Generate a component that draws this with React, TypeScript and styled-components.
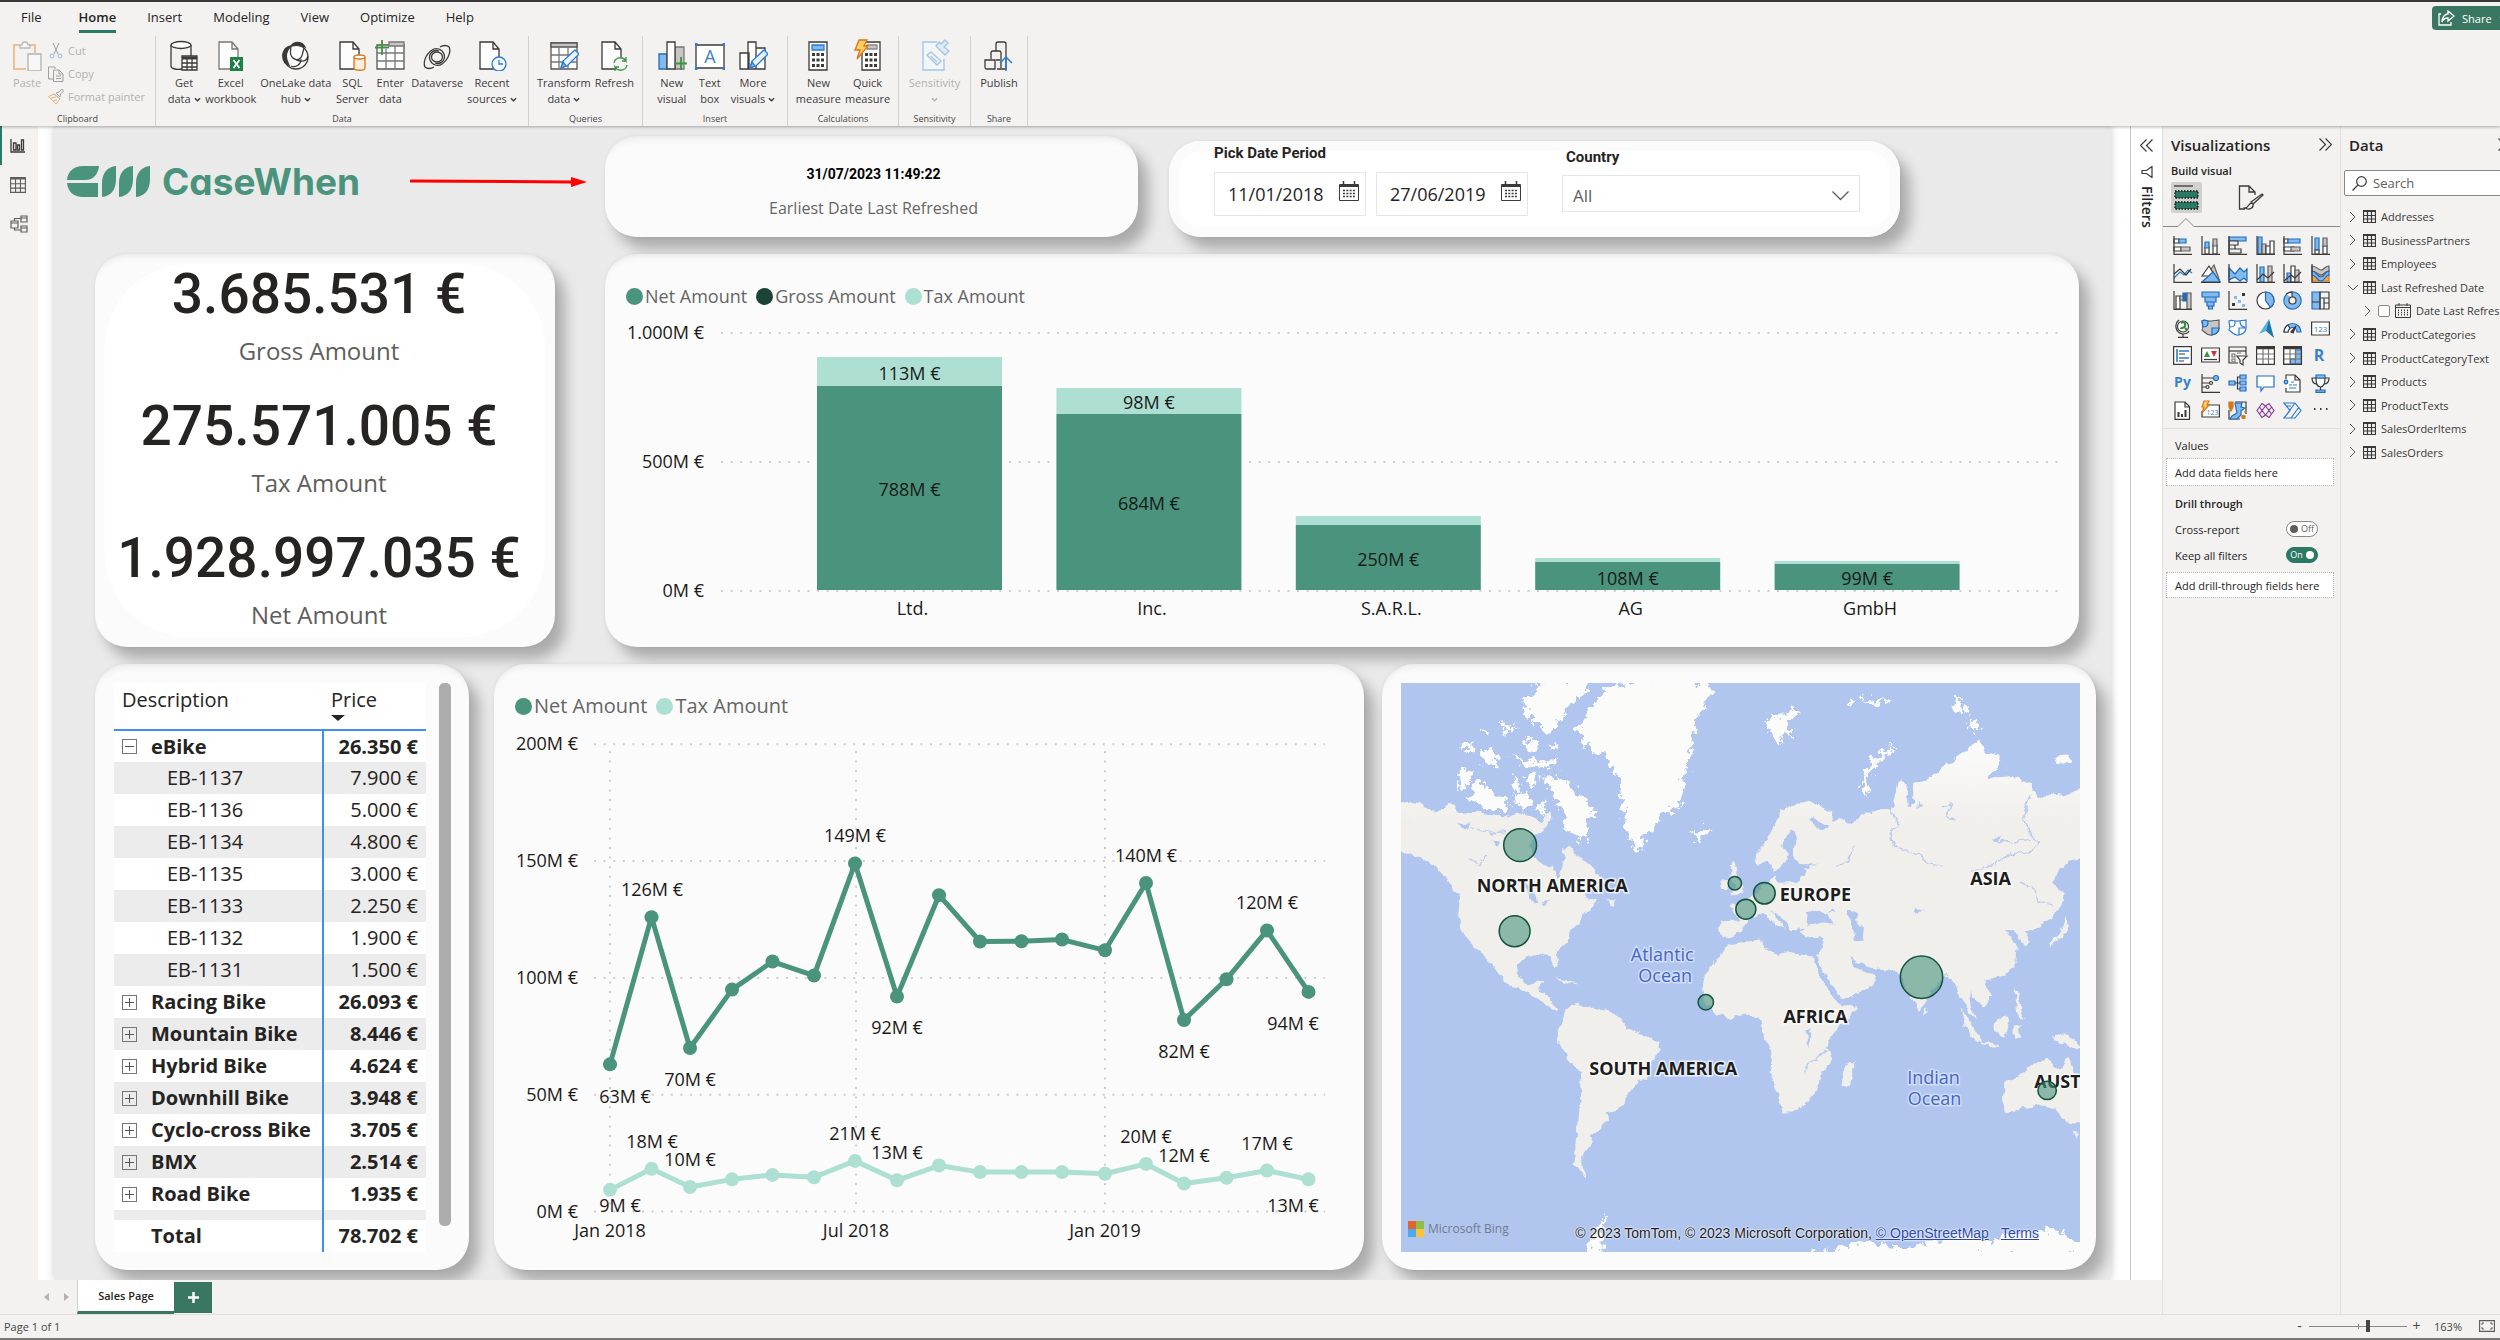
import React from "react";
import styled, { createGlobalStyle, css } from "styled-components";

const UI = `"Segoe UI", "Open Sans", "Noto Sans", sans-serif`;
const DIN = `"DIN", Roboto, "Noto Sans", sans-serif`;
const GREEN = "#4a937d";
const MINT = "#addfd3";
const DARK = "#3b3a39";
const BLUE = "#2b7cd3";
const SKY = "#83b9eb";
const GREY = "#c8c6c4";

const GlobalStyle = createGlobalStyle`
  * { box-sizing: border-box; }
  body { margin: 0; font-family: ${UI}; font-size: 11px; color: #252423; background: #f3f2f1; overflow: hidden; }
  button, input, select { font: inherit; color: inherit; border: 0; background: none; padding: 0; margin: 0; }
  svg { display: block; flex: none; }
`;

const Shell = styled.div`
  display: flex;
  flex-direction: column;
  height: 100vh;
  min-height: 900px;
  border-top: 2px solid ${DARK};
`;

/* ---------- Ribbon ---------- */

const Ribbon = styled.header`
  position: relative;
  z-index: 2;
  flex: none;
  background: #f3f2f1;
  box-shadow: 0 1px 3px rgba(0, 0, 0, 0.3);
`;
const TabBar = styled.nav`
  display: flex;
  align-items: flex-start;
  height: 34px;
  padding-left: 21px;
  overflow: hidden;
  gap: 31px;
`;
const RibbonTab = styled.button<{ $active?: boolean; $first?: boolean }>`
  height: 31px;
  line-height: 24px;
  padding: 3px 0 1px;
  font-size: 13px;
  border-bottom: 3px solid ${(p) => (p.$active ? "#2b7865" : "transparent")};
  font-weight: ${(p) => (p.$active ? 600 : 400)};
  margin-right: ${(p) => (p.$first ? "6px" : "0")};
`;
const ShareButton = styled.button`
  display: flex;
  align-items: center;
  gap: 7px;
  flex: none;
  height: 24px;
  width: 88px;
  margin: 4px -20px 0 auto;
  padding-left: 6px;
  border-radius: 4px;
  background: #3a7763;
  color: #fff;
  font-size: 11px;
  white-space: nowrap;
`;
const Groups = styled.div`
  display: flex;
  height: 90px;
`;
const Group = styled.section<{ $w: number }>`
  display: flex;
  flex-direction: column;
  justify-content: space-between;
  width: ${(p) => p.$w}px;
  border-right: 1px solid #d2d0ce;
`;
const GroupRow = styled.div`
  display: flex;
  justify-content: center;
  gap: 4px;
  padding-top: 3px;
`;
const GroupName = styled.div`
  text-align: center;
  font-size: 9px;
  line-height: 14px;
  color: #484644;
`;
const Tool = styled.button<{ $dim?: boolean }>`
  display: flex;
  flex-direction: column;
  align-items: center;
  gap: 4px;
  min-width: 34px;
  font-size: 11px;
  line-height: 16px;
  white-space: nowrap;
  color: ${(p) => (p.$dim ? "#b3b0ad" : "#3b3a39")};
`;
const ToolText = styled.span`
  display: flex;
  align-items: center;
  justify-content: center;
  min-height: 16px;
  gap: 3px;
`;
const SmallTools = styled.div`
  display: flex;
  flex-direction: column;
`;
const SmallTool = styled.button`
  display: flex;
  align-items: center;
  gap: 4px;
  height: 23px;
  color: #b3b0ad;
`;

const Chevron = ({ size = 7, color = DARK, w = 1.5 }: { size?: number; color?: string; w?: number }) => (
  <svg width={size} height={size} viewBox="0 0 8 8" fill="none" stroke={color} strokeWidth={w} aria-hidden="true">
    <path d="M1 2.5 4 5.5 7 2.5" />
  </svg>
);

const Big = ({ children, dim }: { children: React.ReactNode; dim?: boolean }) => (
  <svg width="30" height="32" viewBox="0 0 30 32" fill="none" stroke={DARK} strokeWidth="1.3" opacity={dim ? 0.45 : 1} aria-hidden="true">
    {children}
  </svg>
);
const Doc = () => <path d="M3 3h13l6 7v20H3zM16 3v7h6" fill="#fdfdfd" />;
const Pencil = () => (
  <g stroke={BLUE}>
    <path d="m12 29 2-7 12-11 4 4-12 12z" fill="#eaf4fd" />
    <path d="m12 29 2-6 3 4z" fill={SKY} />
  </g>
);
const Glyph = styled.text<{ $size: number; $bold?: boolean }>`
  font-size: ${(p) => p.$size}px;
  font-weight: ${(p) => (p.$bold ? 700 : 400)};
  text-anchor: middle;
  fill: #3b82c4;
  stroke: none;
`;

const ribbonIcons: Record<string, React.ReactNode> = {
  paste: (
    <Big dim>
      <path d="M8 6H2v24h12" stroke="#e08a2c" strokeWidth="2" />
      <path d="M17 6h6v8" stroke="#e08a2c" strokeWidth="2" />
      <path d="M8 9V6h2c0-4 6-4 6 0h2v3z" fill="#fff" stroke="#777" />
      <path d="M16 15h13v17H16z" fill="#fff" stroke="#666" />
    </Big>
  ),
  getData: (
    <Big>
      <path d="M2 6v21c0 3 6 4 11 3M22 6v11" />
      <ellipse cx="12" cy="6" rx="10" ry="3.5" fill="#fdfdfd" />
      <path d="M13 17h15v14H13z" fill="#fff" />
      <path d="M13 19h15" strokeWidth="3" />
      <path d="M13 24h15M13 28h15M18 18v13M23 18v13" />
    </Big>
  ),
  excel: (
    <Big>
      <g stroke="#777"><Doc /></g>
      <path d="M14 18h13v14H14z" fill="#1f8043" stroke="none" />
      <path d="m17.5 21 6 8m0-8-6 8" stroke="#fff" strokeWidth="1.8" />
    </Big>
  ),
  oneLake: (
    <Big>
      <circle cx="15" cy="18" r="12" fill="#fdfdfd" />
      <path d="M4 24C-1 16 3 8 10 7 4 13 4 19 8 26zM10 7c3-5 11-5 14 1-5-2-9-2-14-1z" fill={DARK} />
      <path d="M10 8c-2 9 1 12 9 14M15 21c7-1 6-6 8-12M10 27c4 2 10-1 10-7M20 22c4 1 6-2 7-5" />
    </Big>
  ),
  sql: (
    <Big>
      <Doc />
      <path d="M17 18v11c0 3 11 3 11 0V18" fill="#fdeedd" stroke="#d8761c" />
      <ellipse cx="22.5" cy="18" rx="5.5" ry="2" fill="#fff" stroke="#d8761c" />
    </Big>
  ),
  enter: (
    <Big>
      <path d="M2 6h27v24H2z" fill="#fff" stroke="#555" />
      <path d="M14 3h15v4H14z" fill={GREY} stroke="#777" />
      <path d="M2 14h27M2 22h27M11 10v20M20 7v23" stroke="#777" />
      <path d="M7 1v15M0 8.5h14" stroke="#3a9440" strokeWidth="1.8" />
    </Big>
  ),
  dataverse: (
    <Big>
      <ellipse cx="15" cy="18" rx="5.5" ry="5" />
      <path d="M17 12c-6-2-11 3-9 9 2 5 8 7 12 4 7-5 9-13 7-17-2-2-6-2-9 0" />
      <path d="M13 24c6 2 11-3 9-9-2-5-8-7-12-4-7 5-9 13-7 17 2 2 6 2 9 0" />
    </Big>
  ),
  recent: (
    <Big>
      <Doc />
      <circle cx="22" cy="25" r="7" fill="#f4faff" stroke={BLUE} />
      <path d="M22 21v4h4" stroke={BLUE} />
    </Big>
  ),
  transform: (
    <Big>
      <path d="M2 4h26v26H2z" fill="#fff" stroke="#555" />
      <path d="M2 4h26v4H2z" fill={GREY} stroke="#555" />
      <path d="M2 16h26M2 23h26M10 8v22M19 8v22" stroke="#777" />
      <Pencil />
    </Big>
  ),
  refresh: (
    <Big>
      <Doc />
      <circle cx="21" cy="25" r="7" fill="#f3f2f1" stroke="none" />
      <path d="M15 24c1-6 9-7 12-2v-4m0 4h-4M28 26c-1 6-9 7-12 2v4m0-4h4" stroke="#3a9440" />
    </Big>
  ),
  newVisual: (
    <Big>
      <path d="M18 8h9v22h-9z" fill={GREY} stroke="#777" />
      <path d="M2 15h8v15H2z" fill={SKY} stroke="#1f6dbd" />
      <path d="M10 3h8v27h-8z" fill="#fff" />
      <path d="M24 18v13M17 24.5h14" stroke="#3a9440" strokeWidth="1.8" />
    </Big>
  ),
  textBox: (
    <Big>
      <path d="M1 6h28v23H1z" fill="#fff" />
      <Glyph x="15" y="24" $size={18}>A</Glyph>
      <path d="M0 5.5h2.5M27.5 5.5H30M0 29.5h2.5M27.5 29.5H30" stroke={BLUE} strokeWidth="3" />
    </Big>
  ),
  more: (
    <Big>
      <path d="M2 14h9v16H2zM18 9h9v21h-9zM10 3h8v27h-8z" fill="#fff" />
      <Pencil />
    </Big>
  ),
  newMeasure: (
    <Big>
      <path d="M6 3h18v28H6z" fill="#fff" />
      <path d="M9 6h12v5H9z" fill={SKY} stroke={BLUE} />
      <path d="M9 15.5h12M9 21h12M9 26.5h12" strokeDasharray="3 1.5" strokeWidth="3" />
    </Big>
  ),
  quick: (
    <Big>
      <path d="M9 3h18v28H9z" fill="#fff" />
      <path d="M14 6h10v4H14z" fill={GREY} stroke="#888" />
      <path d="M12 15.5h12M12 21h12M12 26.5h12" strokeDasharray="3 1.5" strokeWidth="3" />
      <path d="M6 1h8l-3 6h4L4 20l3-9H2z" fill="#fbcf62" stroke="#d8761c" />
    </Big>
  ),
  sensitivity: (
    <Big dim>
      <g stroke="#3f8fd6">
        <path d="M17 3H3v28h21V20" fill="#f4faff" />
        <path d="m7 16 4-3 10 9-4 4zM11 17l6 6" />
        <path d="m16 7 9 9 4-4-5-4 4-4-3-3-4 4-2-2z" fill="#cfe4f7" />
      </g>
    </Big>
  ),
  publish: (
    <Big>
      <path d="M12 12V5q0-2 2-2h6q2 0 2 2v25h-9M7 20v-6q0-2 2-2h6q2 0 2 2v15M1 21h10v9H3q-2 0-2-2zM12 21h4" />
      <path d="M22 32V18m-6 6 6-6 6 6" stroke={BLUE} strokeWidth="1.5" />
    </Big>
  ),
};

type ToolDef = { icon: string; lines: string[]; menu?: boolean; dim?: boolean };
const ribbonGroups: { name: string; w: number; tools: ToolDef[] }[] = [
  {
    name: "Data",
    w: 373,
    tools: [
      { icon: "getData", lines: ["Get", "data"], menu: true },
      { icon: "excel", lines: ["Excel", "workbook"] },
      { icon: "oneLake", lines: ["OneLake data", "hub"], menu: true },
      { icon: "sql", lines: ["SQL", "Server"] },
      { icon: "enter", lines: ["Enter", "data"] },
      { icon: "dataverse", lines: ["Dataverse"] },
      { icon: "recent", lines: ["Recent", "sources"], menu: true },
    ],
  },
  {
    name: "Queries",
    w: 114,
    tools: [
      { icon: "transform", lines: ["Transform", "data"], menu: true },
      { icon: "refresh", lines: ["Refresh"] },
    ],
  },
  {
    name: "Insert",
    w: 145,
    tools: [
      { icon: "newVisual", lines: ["New", "visual"] },
      { icon: "textBox", lines: ["Text", "box"] },
      { icon: "more", lines: ["More", "visuals"], menu: true },
    ],
  },
  {
    name: "Calculations",
    w: 111,
    tools: [
      { icon: "newMeasure", lines: ["New", "measure"] },
      { icon: "quick", lines: ["Quick", "measure"] },
    ],
  },
  { name: "Sensitivity", w: 72, tools: [{ icon: "sensitivity", lines: ["Sensitivity", ""], menu: true, dim: true }] },
  { name: "Share", w: 57, tools: [{ icon: "publish", lines: ["Publish"] }] },
];

function RibbonBar() {
  return (
    <Ribbon>
      <TabBar>
        {["File", "Home", "Insert", "Modeling", "View", "Optimize", "Help"].map((t) => (
          <RibbonTab key={t} $active={t === "Home"} $first={t === "File"}>{t}</RibbonTab>
        ))}
        <ShareButton>
          <svg width="17" height="16" viewBox="0 0 17 16" fill="none" stroke="#fff" strokeWidth="1.3" aria-hidden="true">
            <path d="M3 4H1v11h12v-3M10 1l6 5-6 5V8C7 8 5 9 4 12c0-5 3-8 6-8z" />
          </svg>
          Share
          <Chevron color="#fff" size={9} />
        </ShareButton>
      </TabBar>
      <Groups>
        <Group $w={156}>
          <GroupRow>
            <Tool $dim>
              {ribbonIcons.paste}
              <span>Paste</span>
            </Tool>
            <SmallTools>
              <SmallTool>
                <svg width="16" height="16" viewBox="0 0 16 16" fill="none" stroke="#a3a09d" aria-hidden="true">
                  <path d="m5 0 5 11M11 0 6 11" />
                  <circle cx="4" cy="13" r="2" stroke="#93bfe8" />
                  <circle cx="12" cy="13" r="2" stroke="#93bfe8" />
                </svg>
                Cut
              </SmallTool>
              <SmallTool>
                <svg width="16" height="16" viewBox="0 0 16 16" fill="none" stroke="#a3a09d" aria-hidden="true">
                  <path d="M5 13H.5V1H7v2M5.5 4H11l4 4v7.5H5.5zM11 4v4h4M8 10h5M8 12.5h5" />
                </svg>
                Copy
              </SmallTool>
              <SmallTool>
                <svg width="16" height="16" viewBox="0 0 16 16" fill="none" stroke="#a3a09d" aria-hidden="true">
                  <path d="m6 5 6 5M8 4l3-1 3-3 1.5 2-3 3-.5 3z" />
                  <path d="M6 5 .5 7.5 8 15l4-5M3 9l5-1M5 12l4-1" stroke="#eab27a" />
                </svg>
                Format painter
              </SmallTool>
            </SmallTools>
          </GroupRow>
          <GroupName>Clipboard</GroupName>
        </Group>
        {ribbonGroups.map((g) => (
          <Group key={g.name} $w={g.w}>
            <GroupRow>
              {g.tools.map((t) => (
                <Tool key={t.icon} $dim={t.dim}>
                  {ribbonIcons[t.icon]}
                  <span>
                    {t.lines.map((l, i) => (
                      <ToolText key={i}>
                        {l}
                        {t.menu && i === t.lines.length - 1 && <Chevron color={t.dim ? "#b3b0ad" : DARK} />}
                      </ToolText>
                    ))}
                  </span>
                </Tool>
              ))}
            </GroupRow>
            <GroupName>{g.name}</GroupName>
          </Group>
        ))}
      </Groups>
    </Ribbon>
  );
}

/* ---------- Workspace ---------- */

const Workspace = styled.div`
  display: flex;
  flex: 1;
  min-height: 0;
`;
const CenterColumn = styled.div`
  display: flex;
  flex-direction: column;
  flex: 1;
  min-width: 0;
`;
const CanvasRow = styled.div`
  display: flex;
  flex: 1;
  min-height: 0;
`;
const Rail = styled.nav`
  width: 38px;
  flex: none;
  display: flex;
  flex-direction: column;
`;
const RailButton = styled.button<{ $active?: boolean }>`
  display: flex;
  align-items: center;
  height: 39px;
  padding-left: 8px;
  border-left: 2px solid ${(p) => (p.$active ? "#2b7865" : "transparent")};
`;
const Canvas = styled.main`
  flex: 1;
  min-width: 0;
  display: flex;
  background: #fff;
  overflow: hidden;
  padding: 0 19px 0 16px;
`;
const Report = styled.div`
  flex: 1;
  min-width: 0;
  display: grid;
  grid-template-rows: 101fr 393fr 605fr;
  gap: 17px;
  padding: 10px 0;
  background: #eaeaea;
  box-shadow: 0 0 8px rgba(0, 0, 0, 0.2);
`;
const TopRow = styled.div`
  display: grid;
  grid-template-columns: 343fr 195fr 533fr 762fr;
  padding: 0 211px 0 13px;
  align-items: end;
  min-height: 0;
  & > :last-child { margin-left: 31px; }
`;
const MiddleRow = styled.div`
  display: grid;
  grid-template-columns: 460fr 1474fr;
  gap: 50px;
  padding: 0 32px 0 41px;
  min-height: 0;
`;
const BottomRow = styled.div`
  display: grid;
  grid-template-columns: 381fr 870fr 714fr;
  column-gap: 18px;
  padding: 0 15px 0 41px;
  min-height: 0;
  & > :first-child { margin-right: 7px; }
`;
const cardBase = css`
  background: #fbfbfb;
  border-radius: 32px;
  box-shadow: 10px 12px 14px rgba(0, 0, 0, 0.27), 0 0 4px rgba(0, 0, 0, 0.06), inset 0 9px 9px -8px rgba(0, 0, 0, 0.1);
`;
const Card = styled.section`
  ${cardBase}
  display: flex;
  flex-direction: column;
  min-width: 0;
  min-height: 0;
`;

/* logo and arrow */
const Logo = styled.div`
  display: flex;
  align-items: center;
  align-self: center;
  gap: 12px;
  height: 34px;
  margin-bottom: 10px;
  color: ${GREEN};
  font-family: Inter, "Open Sans", sans-serif;
  font-feature-settings: "cv11";
  font-size: 37px;
  line-height: 34px;
  font-weight: 700;
`;
const ArrowBox = styled.div`
  align-self: center;
  margin-bottom: 10px;
`;

/* refreshed card */
const RefreshCard = styled(Card)`
  align-self: stretch;
  align-items: center;
  justify-content: center;
  gap: 10px;
  padding: 8px 0 0 4px;
`;
const RefreshValue = styled.strong`
  font: 700 14px/24px ${DIN};
  color: #000;
`;
const RefreshLabel = styled.span`
  font-size: 16px;
  line-height: 24px;
  color: #666;
`;

/* slicers */
const SlicerCard = styled.section`
  ${cardBase}
  display: flex;
  align-items: flex-start;
  gap: 34px;
  height: 96px;
  padding: 0 40px 0 45px;
  background: #fff;
  box-shadow: 10px 12px 14px rgba(0, 0, 0, 0.27), 0 0 4px rgba(0, 0, 0, 0.06), inset 0 0 0 10px #fbfbfb;
`;
const Field = styled.div<{ $grow: number; $gap: number; $top?: number }>`
  flex: ${(p) => p.$grow} 1 0;
  display: flex;
  flex-direction: column;
  gap: ${(p) => p.$gap}px;
  padding-top: ${(p) => p.$top || 0}px;
  min-width: 0;
`;
const FieldLabel = styled.label<{ $inset?: boolean }>`
  font: 700 15px/24px ${DIN};
  padding-left: ${(p) => (p.$inset ? 4 : 0)}px;
  color: #252423;
`;
const DateRow = styled.div`
  display: flex;
  gap: 10px;
`;
const DateBox = styled.div`
  flex: 1;
  display: flex;
  align-items: center;
  justify-content: space-between;
  height: 44px;
  padding: 0 6px 0 13px;
  border: 1px solid #e6e6e6;
  background: #fff;
  min-width: 0;
  & input { width: 104px; font-size: 18px; outline: 0; }
  & button { margin-bottom: 6px; }
`;
const SelectBox = styled.div`
  display: grid;
  align-items: center;
  height: 37px;
  border: 1px solid #e6e6e6;
  & > * { grid-area: 1 / 1; }
  & svg { justify-self: end; margin: 4px 10px 0 0; pointer-events: none; }
`;
const Select = styled.select`
  appearance: none;
  width: 100%;
  height: 100%;
  padding: 4px 0 0 10px;
  font-size: 17px;
  color: #605e5c;
`;

const CalendarIcon = () => (
  <svg width="20" height="20" viewBox="0 0 20 20" fill="none" stroke={DARK} aria-hidden="true">
    <path d="M.5 3.5h19v16H.5z" />
    <path d="M0 5h20" strokeWidth="2" />
    <path d="M4.5 0v5M15.5 0v5" strokeWidth="1.5" />
    <path d="M4 9.5h12M4 12.5h12M4 15.5h12" strokeDasharray="2 1.3" strokeWidth="1.5" />
  </svg>
);

/* KPI */
const KpiCard = styled(Card)`
  padding: 10px;
`;
const KpiPanel = styled.div`
  flex: 1;
  display: flex;
  flex-direction: column;
  align-items: center;
  gap: 28px;
  padding-right: 12px;
  background: #fff;
  border-radius: 84px;
`;
const Kpi = styled.div`
  display: flex;
  flex-direction: column;
  align-items: center;
  gap: 10px;
  white-space: nowrap;
`;
const KpiValue = styled.span`
  font: 500 55px/60px ${DIN};
  color: #252423;
`;
const KpiLabel = styled.span`
  font-size: 24px;
  line-height: 34px;
  color: #605e5c;
`;

/* charts */
const Legend = styled.div<{ $size: number }>`
  display: flex;
  gap: 9px;
  padding: 29px 0 0 21px;
  font-size: ${(p) => p.$size}px;
  line-height: 26px;
  color: #666;
`;
const LegendItem = styled.span<{ $c: string }>`
  display: flex;
  align-items: center;
  gap: 2px;
  &::before {
    content: "";
    width: 17px;
    height: 17px;
    border-radius: 50%;
    background: ${(p) => p.$c};
  }
`;
const Plot = styled.svg`
  width: 100%;
  flex: 1;
  min-height: 0;
  font-family: ${UI};
  font-size: 18px;
  fill: #1b1a19;
`;

const bars = [
  { name: "Ltd.", top: 103, split: 132, net: "788M €", netY: 236, tax: "113M €", taxY: 120 },
  { name: "Inc.", top: 134, split: 160, net: "684M €", netY: 250, tax: "98M €", taxY: 149 },
  { name: "S.A.R.L.", top: 262, split: 271, net: "250M €", netY: 306 },
  { name: "AG", top: 304, split: 308, net: "108M €", netY: 325 },
  { name: "GmbH", top: 307, split: 310, net: "99M €", netY: 325 },
];

function BarChart() {
  return (
    <Plot viewBox="0 55 1474 338" preserveAspectRatio="xMinYMin meet" role="img" aria-label="Amounts by company type">
      {[["1.000M €", 79], ["500M €", 208], ["0M €", 337]].map(([t, y]) => (
        <g key={t}>
          <line x1="116" x2="1456" y1={y} y2={y} stroke="#cfcfcf" strokeWidth="2" strokeDasharray="2 7.6" />
          <text x="99" y={Number(y) + 6} textAnchor="end">{t}</text>
        </g>
      ))}
      {bars.map((b, i) => {
        const x = 212 + i * 239.4;
        const c = x + 92.5;
        return (
          <g key={b.name}>
            <rect x={x} y={b.top} width="185" height={b.split - b.top} fill={MINT} />
            <rect x={x} y={b.split} width="185" height={336 - b.split} fill={GREEN} />
            {b.tax && <text x={c} y={b.taxY! + 6} textAnchor="middle">{b.tax}</text>}
            <text x={c} y={b.netY + 6} textAnchor="middle">{b.net}</text>
            <text x={c + 3} y="361" textAnchor="middle">{b.name}</text>
          </g>
        );
      })}
    </Plot>
  );
}

const months = [116, 157.5, 196, 238, 278.5, 320, 361, 403, 445, 486, 527.5, 568, 611, 652, 690, 732.5, 773, 814.5];
const net = [63, 126, 70, 95, 107, 101, 149, 92, 135.4, 115.6, 115.7, 116.4, 111.8, 140.6, 82, 99.4, 120.3, 94];
const tax = [9.3, 18.3, 10.5, 13.8, 15.7, 14.7, 21.7, 13.4, 19.7, 16.9, 16.9, 16.9, 16.2, 20.4, 12, 14.5, 17.6, 13.8];
const yOf = (v: number) => 547.6 - v * 2.337;
const pointLabels: [string, number, number][] = [
  ["126M €", 158, 226], ["149M €", 361, 172], ["140M €", 652, 192], ["120M €", 773, 239],
  ["94M €", 799, 360], ["82M €", 690, 388], ["92M €", 403, 364], ["70M €", 196, 416],
  ["63M €", 131, 433], ["18M €", 158, 478], ["10M €", 196, 496], ["21M €", 361, 470],
  ["13M €", 403, 489], ["20M €", 652, 473], ["12M €", 690, 492], ["17M €", 773, 480],
  ["9M €", 126, 542], ["13M €", 799, 542],
];

function Series({ data, color }: { data: number[]; color: string }) {
  return (
    <g>
      <polyline points={data.map((v, i) => `${months[i]},${yOf(v)}`).join(" ")} fill="none" stroke={color} strokeWidth="5" strokeLinejoin="round" />
      {data.map((v, i) => (
        <circle key={i} cx={months[i]} cy={yOf(v)} r="7" fill={color} />
      ))}
    </g>
  );
}

function LineChart() {
  return (
    <Plot viewBox="0 55 870 550" preserveAspectRatio="xMinYMin meet" role="img" aria-label="Amounts by month">
      {[200, 150, 100, 50, 0].map((v) => (
        <g key={v}>
          <line x1="100" x2="831" y1={yOf(v)} y2={yOf(v)} stroke="#cfcfcf" strokeWidth="2" strokeDasharray="2 7.6" />
          <text x="84" y={yOf(v) + 6} textAnchor="end">{v}M €</text>
        </g>
      ))}
      {([["Jan 2018", 116], ["Jul 2018", 362], ["Jan 2019", 611]] as [string, number][]).map(([t, x]) => (
        <g key={t}>
          <line x1={x} x2={x} y1="87" y2="547" stroke="#cfcfcf" strokeWidth="2" strokeDasharray="2 7.6" />
          <text x={x} y="573" textAnchor="middle">{t}</text>
        </g>
      ))}
      <Series data={tax} color={MINT} />
      <Series data={net} color={GREEN} />
      {pointLabels.map(([t, x, y], i) => (
        <text key={i} x={x} y={y + 6} textAnchor="middle">{t}</text>
      ))}
    </Plot>
  );
}

/* matrix */
const MatrixCard = styled(Card)`
  flex-direction: row;
  justify-content: space-between;
  align-items: flex-start;
  padding: 19px 18px 0 19px;
`;
const Matrix = styled.table`
  width: 312px;
  border-collapse: collapse;
  table-layout: fixed;
  background: #fff;
  font-size: 20px;
  line-height: 30px;
  white-space: nowrap;
`;
const HeadCell = styled.th<{ $w: number }>`
  width: ${(p) => p.$w}px;
  height: 47px;
  padding: 2px 8px 0;
  vertical-align: top;
  text-align: left;
  font-weight: 400;
  border-bottom: 2px solid #3e8ef7;
`;
const MatrixRow = styled.tr<{ $alt?: boolean; $short?: boolean }>`
  height: ${(p) => (p.$short ? 10 : 32)}px;
  background: ${(p) => (p.$alt ? "#ececec" : "#fff")};
`;
const NameCell = styled.th<{ $bold?: boolean; $child?: boolean }>`
  padding: 0 0 0 ${(p) => (p.$child ? 53 : 8)}px;
  text-align: left;
  font-weight: ${(p) => (p.$bold ? 700 : 400)};
  border-right: 2px solid #3e8ef7;
`;
const NameInner = styled.span`
  display: flex;
  align-items: center;
  gap: 14px;
`;
const ToggleBox = styled.button`
  display: grid;
  place-items: center;
  width: 15px;
  height: 15px;
  border: 1px solid #767676;
  background: transparent;
`;
const Blank = styled.span`
  width: 15px;
`;
const PriceCell = styled.td<{ $bold?: boolean }>`
  padding: 0 8px 0 0;
  text-align: right;
  font-weight: ${(p) => (p.$bold ? 700 : 400)};
`;
const ScrollThumb = styled.div`
  width: 12px;
  height: 543px;
  border-radius: 5px;
  background: #adadad;
`;

const products: [string, string, "open" | "child" | "closed"][] = [
  ["eBike", "26.350 €", "open"],
  ["EB-1137", "7.900 €", "child"],
  ["EB-1136", "5.000 €", "child"],
  ["EB-1134", "4.800 €", "child"],
  ["EB-1135", "3.000 €", "child"],
  ["EB-1133", "2.250 €", "child"],
  ["EB-1132", "1.900 €", "child"],
  ["EB-1131", "1.500 €", "child"],
  ["Racing Bike", "26.093 €", "closed"],
  ["Mountain Bike", "8.446 €", "closed"],
  ["Hybrid Bike", "4.624 €", "closed"],
  ["Downhill Bike", "3.948 €", "closed"],
  ["Cyclo-cross Bike", "3.705 €", "closed"],
  ["BMX", "2.514 €", "closed"],
  ["Road Bike", "1.935 €", "closed"],
];

function PriceMatrix() {
  return (
    <MatrixCard>
      <Matrix>
        <thead>
          <tr>
            <HeadCell $w={209}>Description</HeadCell>
            <HeadCell $w={103}>
              Price
              <svg width="14" height="6" viewBox="0 0 14 6" aria-hidden="true"><path d="M0 0h14L7 6z" fill="#252423" /></svg>
            </HeadCell>
          </tr>
        </thead>
        <tbody>
          {products.map(([name, price, kind], i) => (
            <MatrixRow key={name} $alt={i % 2 === 1}>
              <NameCell scope="row" $bold={kind !== "child"} $child={kind === "child"}>
                <NameInner>
                  {kind !== "child" && (
                    <ToggleBox aria-label={kind === "open" ? `Collapse ${name}` : `Expand ${name}`}>
                      <svg width="9" height="9" viewBox="0 0 9 9" stroke="#555" aria-hidden="true">
                        <path d={kind === "open" ? "M0 4.5h9" : "M0 4.5h9M4.5 0v9"} />
                      </svg>
                    </ToggleBox>
                  )}
                  {name}
                </NameInner>
              </NameCell>
              <PriceCell $bold={kind !== "child"}>{price}</PriceCell>
            </MatrixRow>
          ))}
          <MatrixRow $alt $short aria-hidden="true">
            <NameCell as="td" />
            <PriceCell />
          </MatrixRow>
        </tbody>
        <tfoot>
          <MatrixRow>
            <NameCell scope="row" $bold><NameInner><Blank />Total</NameInner></NameCell>
            <PriceCell $bold>78.702 €</PriceCell>
          </MatrixRow>
        </tfoot>
      </Matrix>
      <ScrollThumb />
    </MatrixCard>
  );
}

/* map */
const MapCard = styled(Card)`
  padding: 19px 16px 18px 19px;
`;
const MapFrame = styled.div`
  position: relative;
  flex: 1;
  min-height: 0;
  overflow: hidden;
  background: #b1c6ef;
`;
const MapSvg = styled.svg`
  width: 100%;
  height: 100%;
  font-family: ${UI};
  font-size: 18px;
`;
const BingMark = styled.div`
  position: absolute;
  left: 7px;
  bottom: 15px;
  display: flex;
  align-items: center;
  gap: 4px;
  font-size: 12px;
  line-height: 16px;
  color: #737b8c;
`;
const Attribution = styled.div`
  position: absolute;
  right: 41px;
  bottom: 10px;
  font: 14px/18px "Liberation Sans", Arial, sans-serif;
  color: #1b1a19;
  white-space: nowrap;
  text-shadow: 0 0 2px #fff, 0 0 2px #fff;
  & a { color: #2f49a8; }
  & a + a { margin-left: 12px; }
`;

const bubbles = [
  [119, 162, 16.4], [113.5, 248, 15.4], [333.5, 200, 6.7], [363, 210, 10.8],
  [344.5, 226, 10], [304.5, 319, 7.7], [520, 294, 21.2], [645.5, 407, 9.2],
];
const places: [string, number, number, ("middle" | "end")?][] = [
  ["NORTH AMERICA", 151, 203], ["EUROPE", 414, 212], ["ASIA", 589, 196],
  ["AFRICA", 414, 334], ["SOUTH AMERICA", 262, 386], ["AUST", 679, 399, "end"],
];
const oceans: [string, number, number][] = [
  ["Atlantic", 261, 272], ["Ocean", 264, 293], ["Indian", 532, 395], ["Ocean", 533, 416],
];

const mainland = [
  "M54 345 100 350 125 372 150 368 165 352 182 375 225 372 245 380 285 384 300 374 335 385 352 400 372 372 374 392 358 420 340 432 330 450 338 480 352 500 378 508 384 534 392 528 396 500 404 488 395 465 412 458 430 485 448 495 472 530 488 540 465 556 442 570 452 582 470 592 452 612 436 620 432 645 412 668 408 690 385 715 388 748 380 752 372 725 345 722 320 730 303 745 305 775 315 790 330 800 345 785 358 782 350 810 370 830 385 852 380 858 345 828 310 805 285 800 265 765 240 730 215 705 192 668 182 625 186 580 160 540 130 500 100 482 54 466Z",
  "M405 855 425 845 450 850 490 858 520 880 530 905 560 915 595 935 598 955 575 1000 570 1020 540 1045 525 1080 510 1105 485 1110 495 1125 470 1150 455 1165 460 1180 440 1210 438 1240 448 1268 430 1250 422 1235 424 1180 430 1120 436 1060 435 1012 405 975 388 935 387 910 400 880Z",
  "M735 700 760 695 800 685 812 690 812 705 840 722 860 715 905 725 915 730 930 780 955 825 972 850 1005 845 985 880 950 920 940 945 952 985 935 1010 920 1050 900 1090 870 1108 852 1108 840 1065 822 1010 830 960 810 915 805 880 775 868 745 875 715 870 690 835 685 810 690 770 720 725Z",
  "M998 980 998 1010 987 1048 972 1045 975 1010 985 990Z",
  "M720 640 762 638 745 605 770 590 800 572 806 552 824 545 835 530 842 546 882 543 897 525 897 508 925 502 885 500 870 475 880 435 870 412 850 450 860 480 842 515 832 522 820 492 798 505 793 478 810 455 835 400 850 368 885 350 905 345 950 372 957 400 935 405 915 385 905 392 930 420 950 398 970 385 990 402 1020 378 1050 365 1075 372 1085 330 1093 292 1106 310 1108 362 1122 350 1118 305 1150 292 1180 262 1235 218 1255 196 1268 225 1298 235 1295 265 1270 290 1320 285 1362 305 1375 340 1400 325 1430 332 1475 312 1475 485 1440 495 1420 515 1406 545 1428 572 1425 600 1408 632 1380 650 1350 662 1362 690 1350 706 1338 690 1332 668 1308 660 1325 682 1335 705 1332 740 1315 768 1290 780 1265 785 1278 805 1278 830 1262 852 1245 830 1236 812 1240 850 1252 880 1240 868 1225 840 1212 815 1205 790 1188 768 1165 800 1145 835 1132 860 1118 835 1102 790 1090 765 1070 758 1035 755 1010 745 990 725 1000 755 1044 775 1035 795 985 830 972 830 950 790 922 735 928 715 936 682 900 680 885 665 900 655 868 662 860 640 840 625 822 612 850 645 855 658 835 650 815 625 800 622 775 642 764 665 745 684 725 682 720 660Z",
  "M742 500 752 498 756 525 768 555 768 572 744 574 754 556 744 535ZM728 540 740 540 735 562 722 560Z",
  "M1305 1035 1340 1015 1355 1000 1375 985 1395 975 1405 990 1420 1005 1430 985 1440 970 1450 1010 1475 1030 1475 1137 1435 1130 1410 1100 1380 1090 1340 1100 1312 1110 1305 1080Z",
  "M1218 850 1262 935 1250 935 1225 895ZM1262 938 1295 942 1295 948 1264 944ZM1285 895 1310 870 1318 885 1308 920 1287 912ZM1405 922 1440 915 1470 950 1460 955 1425 940ZM1328 800 1336 812 1340 850 1350 880 1335 872ZM1325 895 1345 893 1335 905 1340 925 1328 925Z",
  "M1434 625 1440 650 1428 680 1400 705 1398 696 1422 672ZM1145 850 1150 862 1142 868ZM380 778 432 794 400 792ZM486 585 508 590 500 602ZM1448 1155 1462 1158 1455 1172Z",
  "M1410 235 1440 232 1445 252 1415 255Z",
].join("");
const arctic = [
  "M428 165 450 130 470 92 490 70 520 60 570 48 640 48 700 60 709 78 690 102 682 130 668 170 662 220 655 260 642 300 650 332 635 360 600 382 580 412 564 440 560 465 545 468 535 440 530 410 522 380 518 340 508 290 500 262 490 235 460 228 440 200Z",
  "M340 48 400 48 458 52 440 90 410 105 400 130 385 162 372 182 350 160 322 135 318 95 345 80Z",
  "M360 282 400 290 415 315 432 325 450 352 468 382 442 392 452 430 440 446 415 425 400 408 405 380 388 365 378 325 360 305Z",
  "M215 302 240 305 250 320 285 342 280 368 245 368 225 350 205 342Z",
  "M180 278 200 265 212 285 198 315 180 322Z",
  "M228 218 262 225 256 262 232 250ZM188 215 215 200 210 228ZM292 232 330 248 385 240 384 264 320 262ZM268 155 300 160 285 182ZM295 285 312 292 305 325 296 312ZM325 280 345 285 335 310 322 300ZM230 172 248 170 244 186ZM370 205 392 210 380 228ZM300 330 322 325 335 355 318 370 300 355ZM345 345 362 350 358 378 345 368ZM320 195 352 200 345 222 322 215Z",
  "M665 425 685 410 700 418 695 432 675 440Z",
  "M820 132 850 140 875 118 890 130 860 150 875 192 852 182 845 210 825 180Z",
  "M1088 214 1060 235 1038 268 1025 300 1028 335 1012 325 1018 280 1035 240 1065 220Z",
  "M1205 90 1222 95 1230 135 1205 132ZM1233 142 1257 165 1247 182 1232 168ZM1010 95 1045 98 1070 100 1045 115ZM978 102 1000 104 990 112Z",
  "M890 1460 950 1445 980 1430 1040 1428 1100 1442 1150 1430 1200 1410 1280 1420 1350 1402 1400 1395 1440 1408 1475 1440 1475 1460ZM450 1460 458 1410 470 1385 488 1358 478 1400 480 1460Z",
].join("");
const waters =
  "M900 618 925 612 945 625 958 648 925 645 900 648ZM985 612 1005 618 1000 640 1018 660 1015 690 1000 685 995 655 985 635ZM1118 612 1142 612 1125 626ZM303 540 322 545 335 560 345 590 335 592 325 565ZM252 440 268 445 258 458ZM180 400 210 404 195 415ZM900 910 908 905 906 950 900 940ZM945 622 950 612 962 618ZM1130 345 1138 360 1128 365ZM915 735 925 745 945 785 970 832 962 835 940 795ZM1300 430 1292 448 1282 440ZM350 595 372 590 360 602Z";
const rivers =
  "M1075 370 1088 405 1072 425 1080 455 1110 470 1135 475 1150 500 1180 505M1360 330 1348 380 1360 430 1378 450 1360 470 1320 475 1290 500 1240 520M1340 545 1370 560 1380 595 1410 600M1180 360 1200 355 1190 385 1205 390M1290 445 1330 445 1360 440M945 955 900 990 895 1010M1000 455 985 490 960 510M240 480 225 500 205 485M205 410 250 425 280 420";

function WorldMap() {
  return (
    <MapCard>
      <MapFrame>
        <MapSvg viewBox="0 0 679 568" preserveAspectRatio="xMinYMin slice" role="img" aria-label="Sales by country">
          <defs>
            <linearGradient id="land" gradientUnits="userSpaceOnUse" x1="0" y1="180" x2="0" y2="400">
              <stop offset="0" stopColor="#fdfdfd" />
              <stop offset="1" stopColor="#f0efeb" />
            </linearGradient>
            <filter id="coast" x="0" y="0" width="100%" height="100%">
              <feTurbulence type="fractalNoise" baseFrequency="0.12" numOctaves="3" seed="4" />
              <feDisplacementMap in="SourceGraphic" scale="7" xChannelSelector="R" yChannelSelector="G" />
            </filter>
            <filter id="fjords" x="0" y="0" width="100%" height="100%">
              <feTurbulence type="fractalNoise" baseFrequency="0.14" numOctaves="4" seed="9" />
              <feDisplacementMap in="SourceGraphic" scale="18" xChannelSelector="R" yChannelSelector="G" />
            </filter>
          </defs>
          <g filter="url(#coast)">
            <g transform="scale(0.4847 0.4082) translate(-64 -57)">
              <path d={mainland} fill="url(#land)" />
              <path d={waters} fill="#b1c6ef" />
              <path d={rivers} fill="none" stroke="#bccbec" strokeWidth="3" />
            </g>
          </g>
          <g filter="url(#fjords)">
            <g transform="scale(0.4847 0.4082) translate(-64 -57)">
              <path d={arctic} fill="#fbfbfa" />
            </g>
          </g>
          {places.map(([t, x, y, anchor = "middle"]) => (
            <text key={t} x={x} y={y + 6} textAnchor={anchor} fontWeight="700" fill="#1d1d1d" stroke="#ffffff" strokeWidth="3" strokeOpacity="0.7" paintOrder="stroke">{t}</text>
          ))}
          {oceans.map(([t, x, y], i) => (
            <text key={i} x={x} y={y + 6} textAnchor="middle" fill="#4766c4" stroke="#dfe8fb" strokeWidth="3" strokeOpacity="0.7" paintOrder="stroke">{t}</text>
          ))}
          {bubbles.map(([x, y, r], i) => (
            <circle key={i} cx={x} cy={y} r={r} fill={GREEN} fillOpacity="0.6" stroke="#14543f" strokeWidth="1.5" />
          ))}
        </MapSvg>
        <BingMark>
          <svg width="16" height="16" viewBox="0 0 16 16" aria-hidden="true">
            <path d="M0 0h8v8H0z" fill="#e2662b" />
            <path d="M8 0h8v8H8z" fill="#8cc04b" />
            <path d="M0 8h8v8H0z" fill="#4fa9ee" />
            <path d="M8 8h8v8H8z" fill="#f9c33c" />
          </svg>
          Microsoft Bing
        </BingMark>
        <Attribution>
          © 2023 TomTom, © 2023 Microsoft Corporation, <a href="#osm">© OpenStreetMap</a>
          <a href="#terms">Terms</a>
        </Attribution>
      </MapFrame>
    </MapCard>
  );
}

/* ---------- Filters, Visualizations, Data ---------- */

const FiltersPane = styled.aside`
  width: 32px;
  flex: none;
  display: flex;
  flex-direction: column;
  align-items: center;
  gap: 14px;
  background: #fff;
  border-left: 1px solid #c8c6c4;
  padding-top: 13px;
`;
const FiltersText = styled.span`
  writing-mode: vertical-rl;
  font-size: 14px;
  line-height: 20px;
  font-weight: 600;
  margin-top: -6px;
`;
const Pane = styled.aside<{ $w: number }>`
  width: ${(p) => p.$w}px;
  flex: none;
  display: flex;
  flex-direction: column;
  border-left: 1px solid #e1dfdd;
  overflow: hidden;
`;
const PaneTitle = styled.div<{ $wide?: boolean }>`
  display: flex;
  align-items: center;
  justify-content: space-between;
  flex: none;
  height: 37px;
  padding: 0 8px;
  width: ${(p) => (p.$wide ? "178px" : "auto")};
  & h2 { margin: 0; font-size: 15px; font-weight: 600; }
`;
const SubTitle = styled.h3`
  margin: 0 0 3px;
  padding-left: 8px;
  font-size: 11px;
  line-height: 16px;
  font-weight: 600;
`;
const ModeTabs = styled.div`
  display: flex;
  gap: 33px;
  padding-left: 8px;
`;
const ModeTab = styled.button<{ $active?: boolean }>`
  display: grid;
  place-items: center;
  width: 31px;
  height: 31px;
  border-radius: 2px;
  background: ${(p) => (p.$active ? "#d2d0ce" : "transparent")};
`;
const CaretLine = styled.div`
  display: flex;
  height: 14px;
  align-items: flex-end;
  overflow: hidden;
`;
const IconGrid = styled.div`
  display: grid;
  grid-template-columns: repeat(6, 1fr);
  align-content: space-between;
  flex: none;
  height: 202px;
  padding: 9px 2px 8px 10px;
  border-bottom: 1px solid #e1dfdd;
  & button { height: 19px; text-align: left; }
  & svg { overflow: visible; }
`;
const Wells = styled.div`
  display: flex;
  flex-direction: column;
  padding: 5px 6px 0 3px;
`;
const WellName = styled.div<{ $bold?: boolean }>`
  padding-left: 9px;
  line-height: 24px;
  font-weight: ${(p) => (p.$bold ? 600 : 400)};
`;
const Well = styled.div<{ $first?: boolean }>`
  display: flex;
  align-items: center;
  height: ${(p) => (p.$first ? 28 : 26)}px;
  margin: ${(p) => (p.$first ? "0 0 6px" : "4px 0 0")};
  padding-left: 8px;
  background: #fff;
  border: 1px dotted #b3b0ad;
  white-space: nowrap;
`;
const SwitchRow = styled.label`
  display: flex;
  align-items: center;
  justify-content: space-between;
  height: 26px;
  padding: 0 16px 0 9px;
`;
const HiddenInput = styled.input`
  position: absolute;
  opacity: 0;
  pointer-events: none;
`;
const Switch = styled.span<{ $on?: boolean }>`
  display: flex;
  flex-direction: ${(p) => (p.$on ? "row-reverse" : "row")};
  align-items: center;
  justify-content: center;
  gap: 3px;
  width: 32px;
  height: 16px;
  border-radius: 8px;
  border: 1px solid ${(p) => (p.$on ? "#2b7865" : "#8a8886")};
  background: ${(p) => (p.$on ? "#2b7865" : "#fff")};
  color: ${(p) => (p.$on ? "#fff" : "#605e5c")};
  font-size: 9px;
  line-height: 14px;
  &::before {
    content: "";
    width: 8px;
    height: 8px;
    border-radius: 50%;
    background: ${(p) => (p.$on ? "#fff" : "#605e5c")};
  }
`;
const SearchBox = styled.label`
  display: flex;
  align-items: center;
  flex: none;
  gap: 6px;
  width: 190px;
  height: 26px;
  margin: 7px 0 9px 3px;
  padding-left: 7px;
  border: 1px solid #8a8886;
  border-radius: 2px;
  background: #fff;
  & input { width: 100px; font-size: 13px; outline: 0; }
  & input::placeholder { color: #605e5c; opacity: 1; }
`;
const Tree = styled.ul`
  display: flex;
  flex-direction: column;
  justify-content: space-between;
  height: 259px;
  list-style: none;
  margin: 0;
  padding: 0;
`;
const TreeItem = styled.li<{ $child?: boolean }>`
  display: flex;
  align-items: center;
  gap: 5px;
  height: 23px;
  padding-left: ${(p) => (p.$child ? 22 : 7)}px;
  white-space: nowrap;
  color: #3b3a39;
`;
const TreeCheck = styled.input`
  appearance: none;
  flex: none;
  && {
    width: 12px;
    height: 12px;
    border: 1px solid #8a8886;
    border-radius: 2px;
    background: #fff;
  }
`;

const Dbl = ({ left }: { left?: boolean }) => (
  <svg width="13" height="13" viewBox="0 0 13 13" fill="none" stroke={DARK} strokeWidth="1.2" aria-hidden="true">
    <path d={left ? "M6.5.5.5 6.5l6 6M12.5.5l-6 6 6 6" : "M.5.5l6 6-6 6M6.5.5l6 6-6 6"} />
  </svg>
);
const V = ({ children }: { children: React.ReactNode }) => (
  <svg width="19" height="19" viewBox="0 0 19 19" fill="none" stroke={DARK} strokeWidth="1.2" aria-hidden="true">
    {children}
  </svg>
);
const Axis = () => <path d="M1 0v18.4h18" />;
const blueFill = { fill: SKY, stroke: "#1f6dbd" };
const greyFill = { fill: GREY, stroke: "#605e5c" };

const vizIcons: [string, React.ReactNode][] = [
  ["Stacked bar", <V><path d="M1 3h5v4H1z" fill="#fff" /><path d="M6 3h7v4H6z" {...blueFill} /><path d="M1 11h7v4H1z" fill="#fff" /><path d="M8 11h9v4H8z" {...greyFill} /><Axis /></V>],
  ["Stacked column", <V><path d="M4 11h4v7H4z" fill="#fff" /><path d="M4 6h4v6H4z" {...blueFill} /><path d="M12 9h4v9h-4z" fill="#fff" /><path d="M12 3h4v7h-4z" {...greyFill} /><Axis /></V>],
  ["Clustered bar", <V><path d="M1 1h17v4H1z" {...blueFill} /><path d="M1 5h9v4H1zM1 9h6v4H1zM1 13h12v4H1z" fill="#eee" /><Axis /></V>],
  ["Clustered column", <V><path d="M2 1h4v17H2z" {...blueFill} /><path d="M6 8h4v10H6z" {...greyFill} /><path d="M10 10h4v8h-4zM14 5h4v13h-4z" fill="#fff" /><Axis /></V>],
  ["Full stacked bar", <V><path d="M1 3h4v4H1z" fill="#fff" /><path d="M5 3h12v4H5z" {...blueFill} /><path d="M1 11h10v4H1z" fill="#fff" /><path d="M8 11h9v4H8z" {...greyFill} /><Axis /></V>],
  ["Full stacked column", <V><path d="M4 2h4v12H4z" {...blueFill} /><path d="M4 14h4v4H4zM12 10h4v8h-4z" fill="#fff" /><path d="M12 2h4v8h-4z" {...greyFill} /><Axis /></V>],
  ["Line", <V><path d="m1 14 6-6 4 3 4-5 4 3" stroke={BLUE} /><path d="m1 10 6-5 6 6 5-6" /><Axis /></V>],
  ["Area", <V><path d="m8 8 5-7 6 17H8z" {...greyFill} /><path d="M1 12 8 2l6 10z" fill="#fff" /><path d="M1 18 12 8l7 10z" {...blueFill} /><path d="M0 18.4h19" /></V>],
  ["Stacked area", <V><path d="m1 4 6 6 5-6 4 4 3-3v12l-3-3-4 3-5-4-6 3z" {...blueFill} /><Axis /></V>],
  ["Line and stacked column", <V><path d="M4 3h4v15H4z" {...blueFill} /><path d="M12 2h4v16h-4z" {...greyFill} /><path d="m1 16 6-6 5 4 6-6" /><Axis /></V>],
  ["Line and clustered column", <V><path d="M4 9h4v9H4z" {...blueFill} /><path d="M8 2h4v16H8z" fill="#fff" /><path d="M12 6h4v12h-4z" {...greyFill} /><path d="m1 17 7-6 4 3 6-6" /><Axis /></V>],
  ["Ribbon", <V><path d="M1 11h17v6H1z" fill="#f3a64b" stroke="#d8761c" /><path d="M1 2c5 0 6 4 9 4s4-4 8-4v5c-4 0-5 4-8 4S6 7 1 7z" {...greyFill} /><path d="M1 7c4 0 5 6 9 6s4-6 8-6v4c-4 0-4 6-8 6s-5-6-9-6z" {...blueFill} /><Axis /></V>],
  ["Waterfall", <V><path d="M3 5h4v13H3z" fill="#fff" /><path d="M7 5h4v4H7z" {...greyFill} /><path d="M10 2h4v8h-4z" fill="#1f6dbd" stroke="#1f6dbd" /><path d="M14 2h4v16h-4z" {...greyFill} /><Axis /></V>],
  ["Funnel", <V><path d="M1 1h17v5H1zM4 6h11v5H4zM6 11h7v4H6zM7.5 15h4v3h-4z" {...blueFill} /></V>],
  ["Scatter", <V><path d="M4 12h3v3H4zM14 2h3v3h-3z" fill={DARK} stroke="none" /><path d="M6 5h3v3H6zM10 9h3v3h-3zM14 13h3v3h-3z" fill={SKY} stroke="none" /><Axis /></V>],
  ["Pie", <V><circle cx="9.5" cy="9.5" r="8.5" fill="#fff" /><path d="M9.5 1a8.5 8.5 0 0 1 5 15.3l-5-6.8z" {...blueFill} /></V>],
  ["Donut", <V><circle cx="9.5" cy="9.5" r="6" stroke={SKY} strokeWidth="5" /><circle cx="9.5" cy="9.5" r="8.7" stroke="#1f6dbd" /><circle cx="9.5" cy="9.5" r="3.5" /><path d="M3 3.5a8.7 8.7 0 0 1 6-2.6v5" fill="#fff" /></V>],
  ["Treemap", <V><path d="M1 1h8v17H1z" {...blueFill} /><path d="M9 1h9v17H9zM9 7h9M13 7v11M13 12h5M1 11h8" /></V>],
  ["Map", <V><circle cx="10" cy="7.5" r="5.5" fill="#fff" /><path d="M8 4c3-2 5 0 4 3s-4 1-4 3M12 9l2 2" stroke="#2f8f3a" strokeWidth="2.2" /><path d="M6 1c-5 4-4 13 4 14 3 0 5-1 6-3M10 15v3M5 18.4h10" /></V>],
  ["Filled map", <V><path d="M1 2c3-2 6 1 9 0s5 0 8-1v8c0 4-3 6-7 7-5 1-7-3-10-5 2-3 0-6 0-9z" {...greyFill} /><path d="M1 2c3-2 5 0 6 0 0 4 0 6-5 6zM11 9h7c0 4-3 6-7 7z" {...blueFill} /></V>],
  ["Shape map", <V><path d="M1 2c3-2 6 1 9 0s5 0 8-1v8c0 4-3 6-7 7-5 1-7-3-10-5 2-3 0-6 0-9z" fill="#fff" stroke={BLUE} /><path d="M7 2c0 4 0 6-5 6M11 16V9h7M12 2c0 4 2 6 5 6" stroke={BLUE} /></V>],
  ["Azure map", <V><path d="M13 0 3 15l7-3z" fill="#54b3dd" stroke="none" /><path d="m13 0 5 19-8-7z" fill="#1f78a8" stroke="none" /></V>],
  ["Gauge", <V><path d="M1 13a8.5 8.5 0 0 1 17 0h-4a4.5 4.5 0 0 0-9 0z" {...blueFill} /><path d="M1 13a8.5 8.5 0 0 1 4-7l2 3.5A4.5 4.5 0 0 0 5 13z" fill="#fff" /><path d="m8 13 5-6-3 7z" fill={DARK} /></V>],
  ["Card", <V><path d="M.6 3h17.8v13H.6z" fill="#fff" /><Glyph x="9.5" y="12.5" $size={8}>123</Glyph></V>],
  ["Multi-row card", <V><path d="M.6.6h17.8v17.8H.6z" fill="#fff" /><path d="M4 3v13M6 5h10M6 12h10" stroke={BLUE} strokeWidth="1.6" /><path d="M6 8h6M6 15h5" stroke={DARK} /></V>],
  ["KPI", <V><path d="M.6 2h17.8v14H.6z" fill="#fff" /><path d="m3 11 3-6 3 6z" fill="#3a9440" stroke="none" /><path d="m10 5h6l-3 6z" fill="#d13438" stroke="none" /><path d="M3 13.5h13" /></V>],
  ["Slicer", <V><path d="M10 17H1V1h17v8" /><path d="M1 5h17" /><path d="M4 8h3v3H4zM4 13h3v3H4zM9 7h4" stroke="#777" /><path d="M9 10h10l-4 4v5l-3-2v-3z" fill="#fff" /></V>],
  ["Table", <V><path d="M.6.6h17.8v17.8H.6z" fill="#fff" /><path d="M1 2h17" strokeWidth="2.5" /><path d="M1 8h17M1 13h17M7 3v15M12.5 3v15" stroke="#777" /></V>],
  ["Matrix", <V><path d="M.6.6h17.8v17.8H.6z" fill="#fff" /><path d="M12.5 4h6v14h-11v-5h5z" {...blueFill} /><path d="M1 2h17" strokeWidth="2.5" /><path d="M1 8h17M1 13h17M7 3v15M12.5 3v15" stroke="#777" /><path d="M.6.6h17.8v17.8H.6z" /></V>],
  ["R script", <V><Glyph x="8" y="15" $size={16} $bold>R</Glyph></V>],
  ["Python script", <V><Glyph x="9.5" y="13" $size={14} $bold>Py</Glyph></V>],
  ["Key influencers", <V><path d="M1 4h11M1 9h8M1 13h4" /><circle cx="15" cy="4" r="2.5" {...blueFill} /><circle cx="10" cy="9" r="1.5" /><circle cx="6.5" cy="13" r="1.5" /><Axis /></V>],
  ["Decomposition tree", <V><path d="M1 7h6v4H1zM12 1h6v4h-6zM12 7h6v4h-6zM12 13h6v4h-6z" {...blueFill} /><path d="M7 9h5M12 3H9.5v12H12" /></V>],
  ["Q&A", <V><path d="M1 2h17v11H8l-3 4v-4H1z" fill="#fff" stroke="#1f6dbd" /></V>],
  ["Narrative", <V><path d="M3 5V1h9l5 5v12H3v-4M12 1v5h5" fill="#fff" /><circle cx="3" cy="8" r="1.8" {...blueFill} /><path d="M8 8h3M6 11h3M10 11h4M6 14h7" stroke={BLUE} /></V>],
  ["Goals", <V><path d="M5 4h9c0 6-1 9-4.5 9S5 10 5 4z" fill="#fff" /><path d="M5 1h9v3H5zM5 16h9v2.4H5z" {...blueFill} /><path d="M5 4H1c0 4 1 6 5 6M14 4h4c0 4-1 6-5 6M9.5 13v3" /></V>],
  ["Paginated report", <V><path d="M2 1h10l4.5 4.5V18.4H2zM12 1v5h4.5" fill="#fff" /><path d="M5.5 11v5M9 13v3M12.5 9v7" strokeWidth="2" /></V>],
  ["Card (new)", <V><path d="M6 4h12.4v12H1v-6" fill="#fff" /><Glyph x="11.5" y="13.5" $size={7}>123</Glyph><path d="M3 0h5L6 4h2l-7 8 2-6H1z" fill="#fbcf62" stroke="#d8761c" /></V>],
  ["ArcGIS", <V><path d="M7 1h11v12M1 9v9h11" fill="none" /><path d="M7 2h7l-1 4 4 1-4 3v4l-4 4H2l2-3 5-3z" fill={SKY} stroke="#1f6dbd" /><path d="M1 1h4v5l-2 4-2-4z" fill="#d8761c" stroke="#d8761c" /><circle cx="15.5" cy="16" r="2.3" fill="#d8761c" stroke="none" /><circle cx="17.5" cy="11" r="1.3" fill="#d8761c" stroke="none" /></V>],
  ["Power Apps", <V><path d="M6 2.5 9.5 5 13 2.5 18 9.5 13 16.5 9.5 14 6 16.5 1 9.5zM9.500 5 6 9.5l3.5 4.5L13 9.5zM3.500 6 6 9.5l-2.500 3.500M15.500 6 13 9.5l2.500 3.500" stroke="#8a3f9e" /></V>],
  ["Power Automate", <V><path d="M1 2h11l6 7.5-6 7.5H1l6-7.5zM3 5h5M12 2 4 13M16 6 8 17" stroke={BLUE} /></V>],
  ["More visuals", <V><path d="M3 8h1.5M9 8h1.5M15 8h1.5" strokeWidth="1.8" /></V>],
];

const TableGlyph = ({ size = 13 }: { size?: number }) => (
  <svg width={size} height={size} viewBox="0 0 13 13" fill="none" stroke={size > 13 ? "#605e5c" : DARK} aria-hidden="true">
    <path d="M.5.5h12v12H.5zM0 1.5h13M0 5.5h13M0 9h13M4.5 2v11M8.5 2v11" strokeWidth={size > 13 ? 0.9 : 1.2} />
  </svg>
);
const Caret = ({ open }: { open?: boolean }) => (
  <svg width="10" height="10" viewBox="0 0 10 10" fill="none" stroke="#605e5c" aria-hidden="true">
    <path d={open ? "M0 3l5 5 5-5" : "M2 0l5 5-5 5"} />
  </svg>
);

function VisualizationsPane() {
  return (
    <Pane $w={178}>
      <PaneTitle>
        <h2>Visualizations</h2>
        <button aria-label="Collapse"><Dbl /></button>
      </PaneTitle>
      <SubTitle>Build visual</SubTitle>
      <ModeTabs>
        <ModeTab $active aria-label="Build visual">
          <svg width="25" height="25" viewBox="0 0 25 25" aria-hidden="true">
            <path d="M0 1h19" stroke={DARK} strokeWidth="1.3" />
            <path d="M1 6h23v7H1zM1 17h23v7H1z" fill="#2b7865" stroke="#111" strokeWidth="1.3" strokeDasharray="1.5 1.5" />
          </svg>
        </ModeTab>
        <ModeTab aria-label="Format visual">
          <svg width="26" height="25" viewBox="0 0 26 25" fill="none" stroke={DARK} strokeWidth="1.3" aria-hidden="true">
            <path d="M7 24H1.5V1H11l6 6v3M11 1v6h6M25 10 15 19l-2-2 11-8zM14 18c-4 0-3 5-7 5 3 2 9 1 8-4" />
          </svg>
        </ModeTab>
      </ModeTabs>
      <CaretLine>
        <svg width="100%" height="9" aria-hidden="true" fill="none" stroke="#8a8886">
          <path d="M0 8.5h15l8-8 8 8h600" />
        </svg>
      </CaretLine>
      <IconGrid>
        {vizIcons.map(([name, icon]) => (
          <button key={name} aria-label={name}>{icon}</button>
        ))}
      </IconGrid>
      <Wells>
        <WellName>Values</WellName>
        <Well $first>Add data fields here</Well>
        <WellName $bold>Drill through</WellName>
        <SwitchRow>
          Cross-report
          <HiddenInput type="checkbox" />
          <Switch>Off</Switch>
        </SwitchRow>
        <SwitchRow>
          Keep all filters
          <HiddenInput type="checkbox" defaultChecked />
          <Switch $on>On</Switch>
        </SwitchRow>
        <Well>Add drill-through fields here</Well>
      </Wells>
    </Pane>
  );
}

const tables = ["Addresses", "BusinessPartners", "Employees", "Last Refreshed Date", "ProductCategories", "ProductCategoryText", "Products", "ProductTexts", "SalesOrderItems", "SalesOrders"];

function DataPane() {
  return (
    <Pane $w={160}>
      <PaneTitle $wide>
        <h2>Data</h2>
        <button aria-label="Collapse"><Dbl /></button>
      </PaneTitle>
      <SearchBox>
        <svg width="15" height="15" viewBox="0 0 15 15" fill="none" stroke={DARK} strokeWidth="1.2" aria-hidden="true">
          <circle cx="9.5" cy="5.5" r="4.8" />
          <path d="M6 9 .5 14.5" />
        </svg>
        <input placeholder="Search" aria-label="Search" />
      </SearchBox>
      <Tree>
        {tables.map((t) => (
          <React.Fragment key={t}>
            <TreeItem>
              <Caret open={t === "Last Refreshed Date"} />
              <TableGlyph />
              {t}
            </TreeItem>
            {t === "Last Refreshed Date" && (
              <TreeItem $child>
                <Caret />
                <TreeCheck type="checkbox" aria-label="Date Last Refreshed" />
                <svg width="16" height="15" viewBox="0 0 16 15" fill="none" stroke={DARK} aria-hidden="true">
                  <path d="M.5 2h15v12.5H.5zM0 4.5h16M4 0v3M12 0v3" />
                  <path d="M3.5 6.5v6M6.5 6.5v6M9.5 6.5v6M12.5 6.5v6" strokeDasharray="1.5 .8" />
                </svg>
                Date Last Refres
              </TreeItem>
            )}
          </React.Fragment>
        ))}
      </Tree>
    </Pane>
  );
}

/* ---------- Footer ---------- */

const PageTabs = styled.div`
  display: flex;
  flex: none;
  align-items: stretch;
  height: 34px;
  padding-left: 42px;
`;
const Pager = styled.div`
  display: flex;
  align-items: center;
  justify-content: space-between;
  width: 35px;
  padding: 0 7px 0 1px;
`;
const PageTab = styled.button`
  width: 97px;
  background: #fff;
  border-left: 1px solid #d2d0ce;
  border-bottom: 3px solid #3a7763;
  font-size: 11px;
  font-weight: 600;
`;
const AddPage = styled.button`
  display: grid;
  place-items: center;
  width: 38px;
  margin: 2px 0 1px;
  background: #3a7763;
`;
const StatusBar = styled.footer`
  display: flex;
  align-items: center;
  flex: none;
  height: 26px;
  padding: 0 5px 1px 4px;
  border-top: 1px solid #e1dfdd;
  border-bottom: 2px solid #7a7877;
  font-size: 11px;
  color: #484644;
`;
const Zoom = styled.div`
  display: flex;
  align-items: center;
  gap: 5px;
  margin-left: auto;
  & output { margin: 0 12px 0 8px; }
  & button { width: 9px; font-size: 14px; line-height: 14px; }
`;
const ZoomSlider = styled.input`
  appearance: none;
  && {
    width: 98px;
    height: 14px;
    background: linear-gradient(#8a8886, #8a8886) center / 100% 1px no-repeat,
      linear-gradient(#8a8886, #8a8886) 50% 50% / 1px 5px no-repeat;
  }
  &::-webkit-slider-thumb {
    appearance: none;
    width: 4px;
    height: 12px;
    background: #484644;
  }
`;

export default function App() {
  return (
    <Shell>
      <GlobalStyle />
      <RibbonBar />
      <Workspace>
        <CenterColumn>
          <CanvasRow>
            <Rail>
              <RailButton $active aria-label="Report view">
                <svg width="15" height="15" viewBox="0 0 15 15" fill="none" stroke={DARK} strokeWidth="1.3" aria-hidden="true">
                  <path d="M1 1v13h14M3.5 5h2.5v7H3.5zM7.5 7h2v5h-2zM11.5 2h2v10h-2z" />
                </svg>
              </RailButton>
              <RailButton aria-label="Table view"><TableGlyph size={16} /></RailButton>
              <RailButton aria-label="Model view">
                <svg width="18" height="18" viewBox="0 0 18 18" fill="none" stroke="#605e5c" strokeWidth="1.2" aria-hidden="true">
                  <path d="M1 6h7v7H1zM11 1h6v6h-6zM11 11h6v6h-6zM1 8h7M11 3h6M11 13h6M4.5 6V3.5H11M4.5 13v2H11" />
                </svg>
              </RailButton>
            </Rail>
            <Canvas>
              <Report>
                <TopRow>
                  <Logo>
                    <svg width="83" height="31" viewBox="0 0 83 31" fill={GREEN} aria-hidden="true">
                      <path d="M0 14C1 5 7 0 16 0h16c-1 8-5 14-14 14zM0 17h31v14H16C7 31 1 26 0 17z" />
                      <path d="M35 31V18C35 7 40 1 49 0v13c0 11-5 17-14 18zM52 31V18C52 7 57 1 66 0v13c0 11-5 17-14 18zM69 31V18C69 7 74 1 83 0v13c0 11-5 17-14 18z" />
                    </svg>
                    CaseWhen
                  </Logo>
                  <ArrowBox>
                    <svg width="178" height="12" viewBox="0 0 178 12" fill="#f00" aria-hidden="true">
                      <path d="M1 5l160 1" stroke="#f00" strokeWidth="3" strokeLinecap="round" />
                      <path d="M161 1v10l16-5z" />
                    </svg>
                  </ArrowBox>
                  <RefreshCard>
                    <RefreshValue>31/07/2023 11:49:22</RefreshValue>
                    <RefreshLabel>Earliest Date Last Refreshed</RefreshLabel>
                  </RefreshCard>
                  <SlicerCard>
                    <Field $grow={314} $gap={7}>
                      <FieldLabel htmlFor="from">Pick Date Period</FieldLabel>
                      <DateRow>
                        <DateBox>
                          <input id="from" defaultValue="11/01/2018" />
                          <button aria-label="Choose start date"><CalendarIcon /></button>
                        </DateBox>
                        <DateBox>
                          <input aria-label="End date" defaultValue="27/06/2019" />
                          <button aria-label="Choose end date"><CalendarIcon /></button>
                        </DateBox>
                      </DateRow>
                    </Field>
                    <Field $grow={298} $gap={6} $top={4}>
                      <FieldLabel htmlFor="country" $inset>Country</FieldLabel>
                      <SelectBox>
                        <Select id="country"><option>All</option></Select>
                        <svg width="17" height="10" viewBox="0 0 17 10" fill="none" stroke="#605e5c" strokeWidth="1.3" aria-hidden="true">
                          <path d="M.5.5l8 8 8-8" />
                        </svg>
                      </SelectBox>
                    </Field>
                  </SlicerCard>
                </TopRow>
                <MiddleRow>
                  <KpiCard>
                    <KpiPanel>
                      <Kpi><KpiValue>3.685.531 €</KpiValue><KpiLabel>Gross Amount</KpiLabel></Kpi>
                      <Kpi><KpiValue>275.571.005 €</KpiValue><KpiLabel>Tax Amount</KpiLabel></Kpi>
                      <Kpi><KpiValue>1.928.997.035 €</KpiValue><KpiLabel>Net Amount</KpiLabel></Kpi>
                    </KpiPanel>
                  </KpiCard>
                  <Card>
                    <Legend $size={18}>
                      <LegendItem $c={GREEN}>Net Amount</LegendItem>
                      <LegendItem $c="#1b4436">Gross Amount</LegendItem>
                      <LegendItem $c={MINT}>Tax Amount</LegendItem>
                    </Legend>
                    <BarChart />
                  </Card>
                </MiddleRow>
                <BottomRow>
                  <PriceMatrix />
                  <Card>
                    <Legend $size={20}>
                      <LegendItem $c={GREEN}>Net Amount</LegendItem>
                      <LegendItem $c={MINT}>Tax Amount</LegendItem>
                    </Legend>
                    <LineChart />
                  </Card>
                  <WorldMap />
                </BottomRow>
              </Report>
            </Canvas>
            <FiltersPane>
              <button aria-label="Expand filters"><Dbl left /></button>
              <svg width="12" height="12" viewBox="0 0 12 12" fill="none" stroke={DARK} strokeWidth="1.2" aria-hidden="true">
                <path d="M11 .5v11L5.5 7.5H1v-3h4.500z" />
              </svg>
              <FiltersText>Filters</FiltersText>
            </FiltersPane>
          </CanvasRow>
          <PageTabs>
            <Pager>
              <svg width="6" height="8" viewBox="0 0 6 8" aria-hidden="true"><path d="M6 0v8L1 4z" fill="#b3b0ad" /></svg>
              <svg width="6" height="8" viewBox="0 0 6 8" aria-hidden="true"><path d="M0 0v8l5-4z" fill="#b3b0ad" /></svg>
            </Pager>
            <PageTab>Sales Page</PageTab>
            <AddPage aria-label="Add page">
              <svg width="11" height="11" viewBox="0 0 11 11" stroke="#fff" strokeWidth="2.5" aria-hidden="true"><path d="M0 5.5h11M5.5 0v11" /></svg>
            </AddPage>
          </PageTabs>
        </CenterColumn>
        <VisualizationsPane />
        <DataPane />
      </Workspace>
      <StatusBar>
        Page 1 of 1
        <Zoom>
          <button aria-label="Zoom out">-</button>
          <ZoomSlider type="range" min="0" max="100" defaultValue="61" aria-label="Zoom" />
          <button aria-label="Zoom in">+</button>
          <output>163%</output>
          <svg width="16" height="12" viewBox="0 0 16 12" fill="none" stroke="#605e5c" aria-hidden="true">
            <path d="M.5.5h15v11H.5z" strokeWidth="1.3" />
            <path d="M3 5V3h2M11 3h2v2M13 7v2h-2M5 9H3V7" />
          </svg>
        </Zoom>
      </StatusBar>
    </Shell>
  );
}
